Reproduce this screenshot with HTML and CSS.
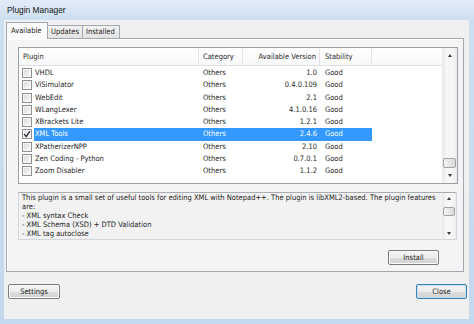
FILE: index.html
```html
<!DOCTYPE html>
<html>
<head>
<meta charset="utf-8">
<title>Plugin Manager</title>
<link rel="stylesheet" href="styles.css">
</head>
<body>
<div class="window">
  <div class="titlebar">Plugin Manager</div>
  <div class="client">
    <div class="tabs">
      <div class="tab tab-active">Available</div>
      <div class="tab">Updates</div>
      <div class="tab">Installed</div>
    </div>
    <div class="panel">
      <div class="list">
        <div class="list-main">
          <div class="lhead">
            <div class="hc hc-plugin">Plugin</div>
            <div class="hc hc-cat">Category</div>
            <div class="hc hc-ver">Available Version</div>
            <div class="hc hc-stab">Stability</div>
            <div class="hc hc-fill"></div>
          </div>
          <div class="rows">
            <div class="row"><span class="c-cb"><span class="cb"></span></span><span class="c-name">VHDL</span><span class="c-cat">Others</span><span class="c-ver">1.0</span><span class="c-stab">Good</span></div>
            <div class="row"><span class="c-cb"><span class="cb"></span></span><span class="c-name">ViSimulator</span><span class="c-cat">Others</span><span class="c-ver">0.4.0.109</span><span class="c-stab">Good</span></div>
            <div class="row"><span class="c-cb"><span class="cb"></span></span><span class="c-name">WebEdit</span><span class="c-cat">Others</span><span class="c-ver">2.1</span><span class="c-stab">Good</span></div>
            <div class="row"><span class="c-cb"><span class="cb"></span></span><span class="c-name">WLangLexer</span><span class="c-cat">Others</span><span class="c-ver">4.1.0.16</span><span class="c-stab">Good</span></div>
            <div class="row"><span class="c-cb"><span class="cb"></span></span><span class="c-name">XBrackets Lite</span><span class="c-cat">Others</span><span class="c-ver">1.2.1</span><span class="c-stab">Good</span></div>
            <div class="row row-sel"><span class="c-cb"><span class="cb cb-checked"><svg viewBox="0 0 8 8" width="8" height="8"><path d="M1.2 4.2 L3.2 6.6 L6.9 1.2" fill="none" stroke="#2b2b3a" stroke-width="1.3"/></svg></span></span><span class="c-name">XML Tools</span><span class="c-cat">Others</span><span class="c-ver">2.4.6</span><span class="c-stab">Good</span></div>
            <div class="row"><span class="c-cb"><span class="cb"></span></span><span class="c-name">XPatherizerNPP</span><span class="c-cat">Others</span><span class="c-ver">2.10</span><span class="c-stab">Good</span></div>
            <div class="row"><span class="c-cb"><span class="cb"></span></span><span class="c-name">Zen Coding - Python</span><span class="c-cat">Others</span><span class="c-ver">0.7.0.1</span><span class="c-stab">Good</span></div>
            <div class="row"><span class="c-cb"><span class="cb"></span></span><span class="c-name">Zoom Disabler</span><span class="c-cat">Others</span><span class="c-ver">1.1.2</span><span class="c-stab">Good</span></div>
          </div>
        </div>
        <div class="sb sb-list">
          <div class="sb-btn"><span class="arr-up"></span></div>
          <div class="sb-track sb-track-end"><div class="sb-thumb"></div></div>
          <div class="sb-btn"><span class="arr-down"></span></div>
        </div>
      </div>
      <div class="desc">
        <div class="desc-text">This plugin is a small set of useful tools for editing XML with Notepad++. The plugin is libXML2-based. The plugin features<br>are:<br>- XML syntax Check<br>- XML Schema (XSD) + DTD Validation<br>- XML tag autoclose</div>
        <div class="sb sb-desc">
          <div class="sb-btn sb-btn-small"><span class="arr-up"></span></div>
          <div class="sb-track"><div class="sb-thumb sb-thumb-small"></div></div>
          <div class="sb-btn sb-btn-small"><span class="arr-down"></span></div>
        </div>
      </div>
      <div class="install-row">
        <button class="btn btn-install">Install</button>
      </div>
    </div>
    <div class="footer">
      <button class="btn btn-settings">Settings</button>
      <button class="btn btn-close">Close</button>
    </div>
  </div>
</div>
</body>
</html>
```

FILE: styles.css
```css
html, body {
  margin: 0;
  padding: 0;
}

body {
  width: 474px;
  height: 324px;
  overflow: hidden;
  font-family: "DejaVu Sans Condensed", "DejaVu Sans", sans-serif;
  font-size: 7.5px;
  color: #1e1e1e;
}

.window {
  width: 474px;
  height: 324px;
  display: flex;
  flex-direction: column;
  background: linear-gradient(to bottom, #e2ecf7 0px, #cddff1 20px, #c4d8ee 100%);
}

.titlebar {
  height: 20px;
  line-height: 21px;
  padding-left: 7px;
  font-family: "Liberation Sans", Arial, sans-serif;
  font-size: 8.4px;
  color: #151515;
  flex: none;
}

.client {
  flex: 1;
  margin: 0 5px 5px 4px;
  padding: 2px 2px 0 2px;
  background: #f0f0f0;
  display: flex;
  flex-direction: column;
}

.tabs {
  height: 16px;
  display: flex;
  align-items: flex-end;
  flex: none;
  position: relative;
  z-index: 1;
}

.tab {
  height: 13px;
  box-sizing: border-box;
  border: 1px solid #a3a7b0;
  border-bottom: none;
  border-left: none;
  background: linear-gradient(to bottom, #f3f3f3, #e3e3e3);
  line-height: 12px;
  padding: 0 3px;
  color: #222;
}

.tab:nth-child(2) { width: 35px; }
.tab:nth-child(3) { width: 37px; }

.tab-active {
  width: 42px;
  height: 17px;
  margin-bottom: -1px;
  border-left: 1px solid #a3a7b0;
  background: #fbfbfb;
  line-height: 15px;
  padding-left: 4px;
}

.panel {
  flex: 1;
  margin-right: 3px;
  border: 1px solid #a3a7b0;
  background: #f4f4f4;
  box-shadow: inset 1px 1px 0 #ffffff;
  padding: 8px 5px 0 11px;
  display: flex;
  flex-direction: column;
}

.list {
  height: 137px;
  box-sizing: border-box;
  border: 1px solid #9a9ea6;
  background: #ffffff;
  display: flex;
  flex: none;
}

.list-main {
  flex: 1;
  display: flex;
  flex-direction: column;
  overflow: hidden;
}

.lhead {
  height: 17px;
  display: flex;
  border-bottom: 1px solid #dedfe2;
  background: linear-gradient(to bottom, #ffffff, #f7f8f9);
  flex: none;
}

.hc {
  box-sizing: border-box;
  height: 17px;
  padding-top: 3px;
  line-height: 12px;
  border-right: 1px solid #e4e5e8;
  color: #2a2a2a;
  white-space: nowrap;
}

.hc-plugin { width: 180px; padding-left: 4px; }
.hc-cat { width: 44px; padding-left: 4px; }
.hc-ver { width: 77px; text-align: right; padding-right: 3px; }
.hc-stab { width: 52px; padding-left: 5px; }
.hc-fill { flex: 1; border-right: none; }

.rows {
  padding-top: 1px;
}

.row {
  height: 12.25px;
  display: grid;
  grid-template-columns: 15px 165px 44px 77px 52px;
  align-items: stretch;
  line-height: 12px;
  white-space: nowrap;
}

.row > span {
  display: block;
  box-sizing: border-box;
}

.c-cb {
  display: flex !important;
  align-items: center;
  padding-left: 3px;
}

.c-name { padding-left: 1px; }
.c-cat { padding-left: 4px; }
.c-ver { text-align: right; padding-right: 3px; }
.c-stab { padding-left: 5px; }

.row-sel .c-name,
.row-sel .c-cat,
.row-sel .c-ver,
.row-sel .c-stab {
  background: #3399ff;
  color: #ffffff;
}

.cb {
  width: 10px;
  height: 10px;
  box-sizing: border-box;
  border: 1px solid #8e8f8f;
  background: linear-gradient(135deg, #d6d8db 0%, #eeeeee 60%, #fbfbfb 100%);
  box-shadow: inset 0 0 0 1px #f6f6f6;
  display: flex;
  align-items: center;
  justify-content: center;
}

.sb {
  width: 15px;
  flex: none;
  display: flex;
  flex-direction: column;
  background: linear-gradient(to right, #e8e8e8, #f6f6f6 30%, #f6f6f6 70%, #ececec);
}

.sb-btn {
  height: 15px;
  flex: none;
  display: flex;
  align-items: center;
  justify-content: center;
}

.sb-btn-small {
  height: 11px;
}

.sb-track {
  flex: 1;
  display: flex;
  flex-direction: column;
  padding: 0 1px;
}

.sb-track-end {
  justify-content: flex-end;
}

.sb-thumb {
  height: 10px;
  box-sizing: border-box;
  border: 1px solid #a2a2a2;
  border-radius: 2px;
  background: linear-gradient(to right, #f4f4f4, #e6e6e6 50%, #d9d9d9);
}

.sb-thumb-small {
  height: 9px;
  margin-top: 3px;
}

.arr-up,
.arr-down {
  width: 0;
  height: 0;
  border-left: 2.5px solid transparent;
  border-right: 2.5px solid transparent;
}

.arr-up { border-bottom: 3px solid #3c3c3c; }
.arr-down { border-top: 3px solid #3c3c3c; }

.desc {
  margin-top: 8px;
  margin-right: 1px;
  height: 48px;
  box-sizing: border-box;
  border: 1px solid #d3d6dc;
  border-top-color: #a9acb3;
  background: #f2f2f2;
  display: flex;
  flex: none;
}

.desc-text {
  flex: 1;
  padding: 0 0 0 3px;
  line-height: 9px;
  white-space: nowrap;
  overflow: hidden;
  color: #222;
}

.sb-desc {
  width: 14px;
}

.install-row {
  display: flex;
  justify-content: flex-end;
  margin-top: 10px;
  padding-right: 19px;
}

.btn {
  font-family: "DejaVu Sans Condensed", "DejaVu Sans", sans-serif;
  font-size: 7.5px;
  color: #1e1e1e;
  height: 15px;
  box-sizing: border-box;
  border: 1px solid #7b7b7b;
  border-radius: 2px;
  background: linear-gradient(to bottom, #f4f4f4 0%, #ececec 50%, #dddddd 50%, #d2d2d2 100%);
  box-shadow: inset 0 0 0 1px #fbfbfb;
  padding: 0;
  margin: 0;
  line-height: 12px;
}

.btn-install { width: 51px; }
.btn-settings { width: 52px; }

.btn-close {
  width: 51px;
  border-color: #3c7fb1;
  box-shadow: inset 0 0 0 1px #bfe4f8;
}

.footer {
  height: 35px;
  flex: none;
  display: flex;
  justify-content: space-between;
  align-items: flex-start;
  padding: 12px 0 0 2px;
}
```
